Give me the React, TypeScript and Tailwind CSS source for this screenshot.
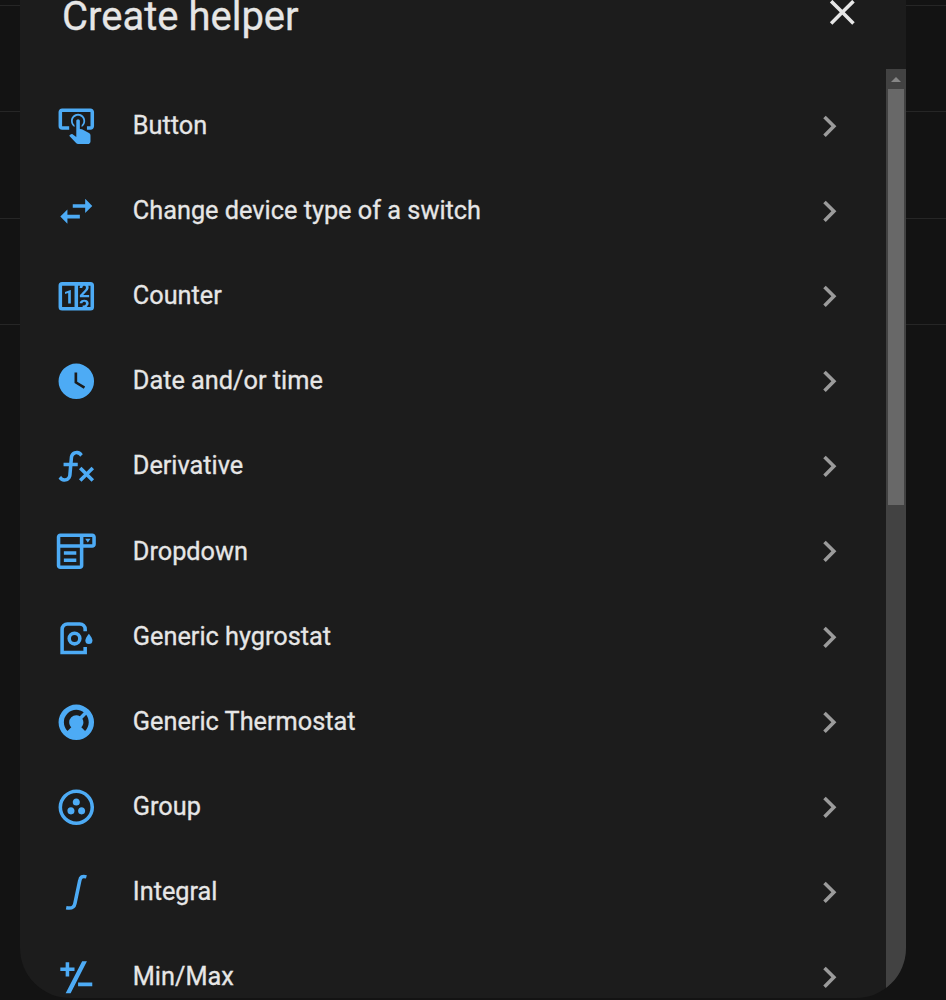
import React from 'react';

interface HelperType {
  name: string;
  icon: React.ReactNode;
}

const helpers: HelperType[] = [
  {
    name: 'Button',
    icon: <path d="M13 5C15.21 5 17 6.79 17 9C17 10.5 16.2 11.77 15 12.46V11.24C15.61 10.69 16 9.89 16 9C16 7.34 14.66 6 13 6S10 7.34 10 9C10 9.89 10.39 10.69 11 11.24V12.46C9.8 11.77 9 10.5 9 9C9 6.79 10.79 5 13 5M20 20.5C19.97 21.32 19.32 21.97 18.5 22H13C12.62 22 12.26 21.85 12 21.57L8 17.37L8.74 16.6C8.93 16.39 9.2 16.28 9.5 16.28H9.7L12 18V9C12 8.45 12.45 8 13 8S14 8.45 14 9V13.47L15.21 13.6L19.15 15.79C19.68 16.03 20 16.56 20 17.14V20.5M20 2H4C2.9 2 2 2.9 2 4V12C2 13.11 2.9 14 4 14H8V12L4 12L4 4H20L20 12H18V14H20V13.97L20.04 14C21.13 14 22 13.09 22 12V4C22 2.9 21.11 2 20 2Z" />,
  },
  {
    name: 'Change device type of a switch',
    icon: <path d="M21,9L17,5V8H10V10H17V13M7,11L3,15L7,19V16H14V14H7V11Z" />,
  },
  {
    name: 'Counter',
    icon: <path d="M4,4H20A2,2 0 0,1 22,6V18A2,2 0 0,1 20,20H4A2,2 0 0,1 2,18V6A2,2 0 0,1 4,4M4,6V18H11V6H4M20,18V6H18.76C19,6.54 18.95,7.07 18.95,7.13C18.88,7.8 18.41,8.5 18.24,8.75L15.91,11.3L19.23,11.28L19.24,12.5L14.04,12.47L14,11.47C14,11.47 17.05,8.24 17.2,7.95C17.34,7.67 17.91,6 16.5,6C15.27,6.05 15.41,7.3 15.41,7.3L13.87,7.31C13.87,7.31 13.88,6.65 14.25,6H13V18H15.58L15.57,17.14L16.54,17.13C16.54,17.13 17.45,16.97 17.46,16.08C17.5,15.08 16.65,15.08 16.5,15.08C16.37,15.08 15.43,15.13 15.43,15.95H13.91C13.91,15.95 13.95,13.89 16.5,13.89C19.1,13.89 18.96,15.91 18.96,15.91C18.96,15.91 19,17.16 17.85,17.63L18.37,18H20M8.92,16H7.42V10.2L5.62,10.76V9.53L8.76,8.41H8.92V16Z" />,
  },
  {
    name: 'Date and/or time',
    icon: <path d="M12,2A10,10 0 0,0 2,12A10,10 0 0,0 12,22A10,10 0 0,0 22,12A10,10 0 0,0 12,2M16.2,16.2L11,13V7H12.5V12.2L17,14.9L16.2,16.2Z" />,
  },
  {
    name: 'Derivative',
    icon: <path d="M12.42,5.29C11.32,5.19 10.35,6 10.25,7.11L10,10H12.82V12H9.82L9.38,17.07C9.18,19.27 7.24,20.9 5.04,20.7C3.79,20.59 2.66,19.9 2,18.83L3.5,17.33C3.83,18.38 4.96,18.97 6,18.63C6.78,18.39 7.33,17.7 7.4,16.89L7.82,12H4.82V10H8L8.27,6.93C8.46,4.73 10.39,3.1 12.6,3.28C13.86,3.39 15,4.09 15.66,5.17L14.16,6.67C13.91,5.9 13.23,5.36 12.42,5.29M22,13.65L20.59,12.24L17.76,15.07L14.93,12.24L13.5,13.65L16.35,16.5L13.5,19.31L14.93,20.72L17.76,17.89L20.59,20.72L22,19.31L19.17,16.5L22,13.65Z" />,
  },
  {
    name: 'Dropdown',
    icon: <path d="M17 5H20L18.5 7L17 5M3 2H21C22.11 2 23 2.9 23 4V8C23 9.11 22.11 10 21 10H16V20C16 21.11 15.11 22 14 22H3C1.9 22 1 21.11 1 20V4C1 2.9 1.9 2 3 2M3 4V8H14V4H3M21 8V4H16V8H21M3 20H14V10H3V20M5 12H12V14H5V12M5 16H12V18H5V16Z" />,
  },
  {
    name: 'Generic hygrostat',
    icon: (
      <>
        <path d="M17 8.6V7.5A3 3 0 0 0 14 4.5H7A3 3 0 0 0 4 7.5V20.6H17V17.5" fill="none" stroke="currentColor" strokeWidth="2" />
        <circle cx="11" cy="12.7" r="3" fill="none" stroke="currentColor" strokeWidth="2" />
        <path d="M19.1 10C19.1 10 21.1 12.4 21.1 13.8A2 2 0 0 1 17.1 13.8C17.1 12.4 19.1 10 19.1 10Z" />
      </>
    ),
  },
  {
    name: 'Generic Thermostat',
    icon: <path d="M16.95,16.95L14.83,14.83C15.55,14.1 16,13.1 16,12C16,11.26 15.79,10.57 15.43,10L17.6,7.81C18.5,9 19,10.43 19,12C19,13.93 18.22,15.68 16.95,16.95M12,5C13.57,5 15,5.5 16.19,6.4L14,8.56C13.43,8.21 12.74,8 12,8A4,4 0 0,0 8,12C8,13.1 8.45,14.1 9.17,14.83L7.05,16.95C5.78,15.68 5,13.93 5,12A7,7 0 0,1 12,5M12,2A10,10 0 0,0 2,12A10,10 0 0,0 12,22A10,10 0 0,0 22,12A10,10 0 0,0 12,2Z" />,
  },
  {
    name: 'Group',
    icon: <path d="M15,12C13.89,12 13,12.89 13,14A2,2 0 0,0 15,16A2,2 0 0,0 17,14C17,12.89 16.1,12 15,12M12,20A8,8 0 0,1 4,12A8,8 0 0,1 12,4A8,8 0 0,1 20,12A8,8 0 0,1 12,20M12,2A10,10 0 0,0 2,12A10,10 0 0,0 12,22A10,10 0 0,0 22,12C22,6.47 17.5,2 12,2M14,9C14,7.89 13.1,7 12,7C10.89,7 10,7.89 10,9A2,2 0 0,0 12,11A2,2 0 0,0 14,9M9,12A2,2 0 0,0 7,14A2,2 0 0,0 9,16A2,2 0 0,0 11,14C11,12.89 10.1,12 9,12Z" />,
  },
  {
    name: 'Integral',
    icon: <path d="M17.7 3.3C15.4 2.7 14.3 3.2 13.9 5.6L11.2 18.4C10.7 20.8 9.4 21.3 6.3 20.7" fill="none" stroke="currentColor" strokeWidth="2" />,
  },
  {
    name: 'Min/Max',
    icon: <path d="M15.3 3H18L8.8 21H6L15.3 3M6 3.5H8V6.5H11V8.5H8V11.5H6V8.5H3V6.5H6V3.5M13 15H21V17H13V15Z" />,
  },
];

function HelperRow({ name, icon }: HelperType) {
  return (
    <li className="flex h-[85.15px] shrink-0 items-center pr-[35px] pl-[35px]">
      <svg viewBox="0 0 24 24" className="h-[42.6px] w-[42.6px] shrink-0 text-[#4dabf5]" fill="currentColor">
        {icon}
      </svg>
      <span className="-mt-[0.4px] ml-[35.2px] flex-1 text-[25.3px] leading-8 whitespace-nowrap [-webkit-text-stroke:0.3px]">{name}</span>
      <svg viewBox="0 0 24 24" className="h-[42.6px] w-[42.6px] shrink-0 text-[#9b9b9b]" fill="currentColor">
        <path d="M8.59,16.58L13.17,12L8.59,7.41L10,6L16,12L10,18L8.59,16.58Z" />
      </svg>
    </li>
  );
}

function Scrollbar() {
  return (
    <div className="flex w-5 shrink-0 flex-col items-center bg-[#424242]">
      <div className="flex h-5 w-full items-center justify-center">
        <svg viewBox="0 0 10 5" className="h-[5px] w-[10px]" fill="#868686">
          <path d="M5 0L10 5H0Z" />
        </svg>
      </div>
      <div className="h-[416px] w-4 bg-[#686868]" />
    </div>
  );
}

export default function App() {
  return (
    <div className="relative h-[1000px] w-[946px] overflow-hidden bg-[#131313] font-['Roboto',sans-serif] text-[#e6e6e6]">
      {/* table rows behind the dialog */}
      <div className="flex flex-col">
        <div className="h-[6px] border-b border-[#262626]" />
        <div className="h-[106.4px] border-b border-[#262626]" />
        <div className="h-[106.4px] border-b border-[#262626]" />
        <div className="h-[106.4px] border-b border-[#262626]" />
      </div>

      <div className="absolute top-0 left-5 flex h-[998px] w-[886px] flex-col overflow-hidden rounded-b-[50px] bg-[#1c1c1c]">
        <header className="flex h-[69px] shrink-0 items-start justify-between pr-[42.5px] pl-[42px]">
          <h1 className="-mt-[4px] text-[40px] leading-[42px] whitespace-nowrap [-webkit-text-stroke:0.3px]">Create helper</h1>
          <button aria-label="Close" className="-mt-[9px]">
            <svg viewBox="0 0 24 24" className="h-[42.6px] w-[42.6px]" fill="currentColor">
              <path d="M19,6.41L17.59,5L12,10.59L6.41,5L5,6.41L10.59,12L5,17.59L6.41,19L12,13.41L17.59,19L19,17.59L13.41,12L19,6.41Z" />
            </svg>
          </button>
        </header>
        <div className="flex min-h-0 flex-1">
          <ul className="flex flex-1 flex-col overflow-hidden pt-[14.5px]">
            {helpers.map(helper => (
              <HelperRow key={helper.name} {...helper} />
            ))}
          </ul>
          <Scrollbar />
        </div>
      </div>
    </div>
  );
}
